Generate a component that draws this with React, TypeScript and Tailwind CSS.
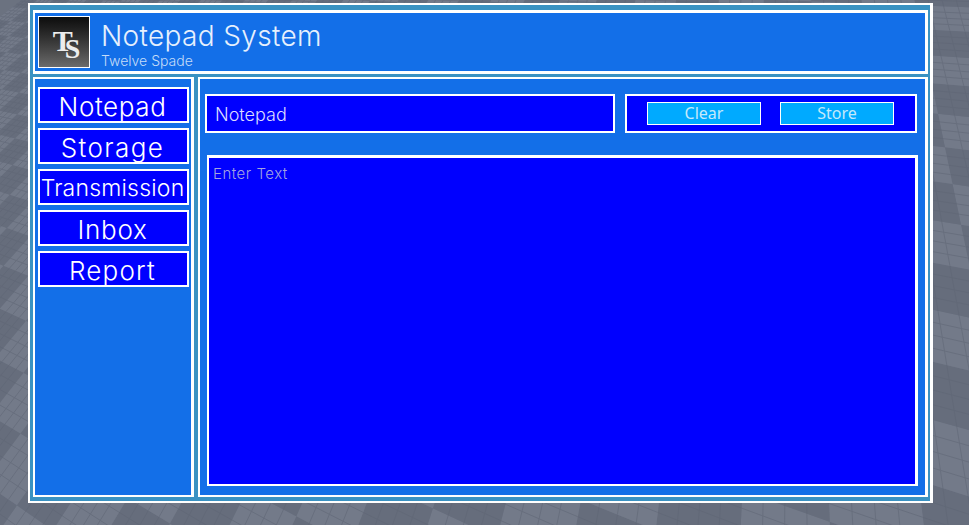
const display = { fontFamily: '"Inter", "Liberation Sans", sans-serif' };
const body = { fontFamily: '"Noto Sans", "Open Sans", sans-serif' };

function NavButton({ label, size }: { label: string; size: string }) {
  return (
    <div
      style={display}
      className={`flex h-9 w-[151px] items-center justify-center border-2 border-white bg-[#0000ff] pr-[2px] pt-[3px] font-light leading-none text-white ${size}`}
    >
      {label}
    </div>
  );
}

function ActionButton({ label }: { label: string }) {
  return (
    <div
      style={body}
      className="flex h-[23px] w-[114px] items-center justify-center border border-white bg-[#00aaff] pb-[2px] text-[16px] leading-none text-[#c4e9fb]"
    >
      {label}
    </div>
  );
}

// Perspective floor: two vanishing points, checkered tiles with a fine inner grid.
const VA = [-800, -60];
const VB = [790, -600];
const O = [500, 300];
const A = 0.04;
const B = 0.047;

function project(u: number, v: number): [number, number] | null {
  const d = 1 + A * u + B * v;
  if (d < 0.12) return null;
  return [
    (A * u * VA[0] + B * v * VB[0] + O[0]) / d,
    (A * u * VA[1] + B * v * VB[1] + O[1]) / d,
  ];
}

function Backdrop() {
  const tiles: React.ReactNode[] = [];
  const divisions = 4;
  for (let u = -24; u < 24; u++) {
    for (let v = -24; v < 24; v++) {
      const corners = [project(u, v), project(u + 1, v), project(u + 1, v + 1), project(u, v + 1)];
      if (corners.some((c) => !c)) continue;
      const pts = corners as [number, number][];
      const xs = pts.map((p) => p[0]);
      const ys = pts.map((p) => p[1]);
      if (Math.max(...xs) < 0 || Math.min(...xs) > 969 || Math.max(...ys) < 0 || Math.min(...ys) > 525) continue;
      const light = (u + v) % 2 === 0;
      let d = "";
      for (let i = 1; i < divisions; i++) {
        const t = i / divisions;
        const a = project(u + t, v)!;
        const b = project(u + t, v + 1)!;
        const c = project(u, v + t)!;
        const e = project(u + 1, v + t)!;
        d += `M${a[0]} ${a[1]}L${b[0]} ${b[1]}M${c[0]} ${c[1]}L${e[0]} ${e[1]}`;
      }
      tiles.push(
        <g key={`${u}:${v}`}>
          <polygon points={pts.map((p) => p.join(",")).join(" ")} fill={light ? "#737a89" : "#666d7c"} />
          <path d={d} stroke={light ? "#686f7e" : "#626978"} strokeWidth="1" fill="none" />
        </g>,
      );
    }
  }
  return (
    <svg className="absolute inset-0 h-full w-full" viewBox="0 0 969 525" aria-hidden="true">
      <rect width="969" height="525" fill="#6b7280" />
      {tiles}
    </svg>
  );
}

export default function App() {
  return (
    <div className="relative h-[525px] w-[969px] overflow-hidden">
      <Backdrop />
      <div className="relative ml-7 mt-[3px] h-[500px] w-[905px]">
        <div className="h-full w-full border-2 border-r-[3px] border-white bg-[#3a92c2] pl-[3px] pr-[2px] pt-[5px]">
          <header className="flex h-[64px] w-[895px] items-center border-[3px] border-l-2 border-white bg-[#136fe8] pl-[3px]">
            <div className="flex h-[52px] w-[52px] items-center justify-center border border-white bg-gradient-to-b from-[#0d0d0d] to-[#6b6b6b]">
              <span
                className="whitespace-nowrap pb-[3px] pr-[3px] text-[30px] font-bold leading-none tracking-[-8px] text-[#ececec]"
                style={{ fontFamily: '"Liberation Serif", serif' }}
              >
                T<span className="relative top-[7px] text-[28px]">S</span>
              </span>
            </div>
            <div className="ml-[11px] pt-[2px]" style={display}>
              <div className="text-[28px] font-light leading-[34px] tracking-[0.35px] text-[#e6f0fd]">Notepad System</div>
              <div className="text-[14px] font-light leading-[15px] text-[#c4dcf8]">Twelve Spade</div>
            </div>
          </header>
          <div className="mt-[3px] flex gap-[4px]">
            <aside className="flex h-[420px] w-[161px] flex-col gap-[5px] border-2 border-r-[3px] border-white bg-[#136fe8] pl-[3px] pt-2">
              <NavButton label="Notepad" size="text-[26px] tracking-[0.6px]" />
              <NavButton label="Storage" size="text-[26px] tracking-[1.4px]" />
              <NavButton label="Transmission" size="text-[23px] tracking-[0.2px]" />
              <NavButton label="Inbox" size="text-[26px] tracking-[0.7px]" />
              <NavButton label="Report" size="text-[26px] tracking-[1.2px]" />
            </aside>
            <main className="h-[420px] w-[730px] border-2 border-r-[3px] border-white bg-[#136fe8] pl-[5px] pt-[15px]">
              <div className="flex gap-[10px]">
                <div
                  style={display}
                  className="flex h-[39px] w-[410px] items-center border-2 border-white bg-[#0000ff] pl-2 pt-[2px] text-[18px] font-light text-[#dcdcff]"
                >
                  Notepad
                </div>
                <div className="flex h-[39px] w-[292px] items-center gap-[19px] border-2 border-white bg-[#0000ff] pl-5">
                  <ActionButton label="Clear" />
                  <ActionButton label="Store" />
                </div>
              </div>
              <div
                style={display}
                className="ml-[2px] mt-[22px] h-[331px] w-[711px] border-2 border-r-[3px] border-t-[3px] border-white bg-[#0000ff] pl-[4px] pt-[7px] text-[15px] font-light leading-[17px] tracking-[0.5px] text-[#a4a4e0]"
              >
                Enter Text
              </div>
            </main>
          </div>
        </div>
      </div>
    </div>
  );
}
